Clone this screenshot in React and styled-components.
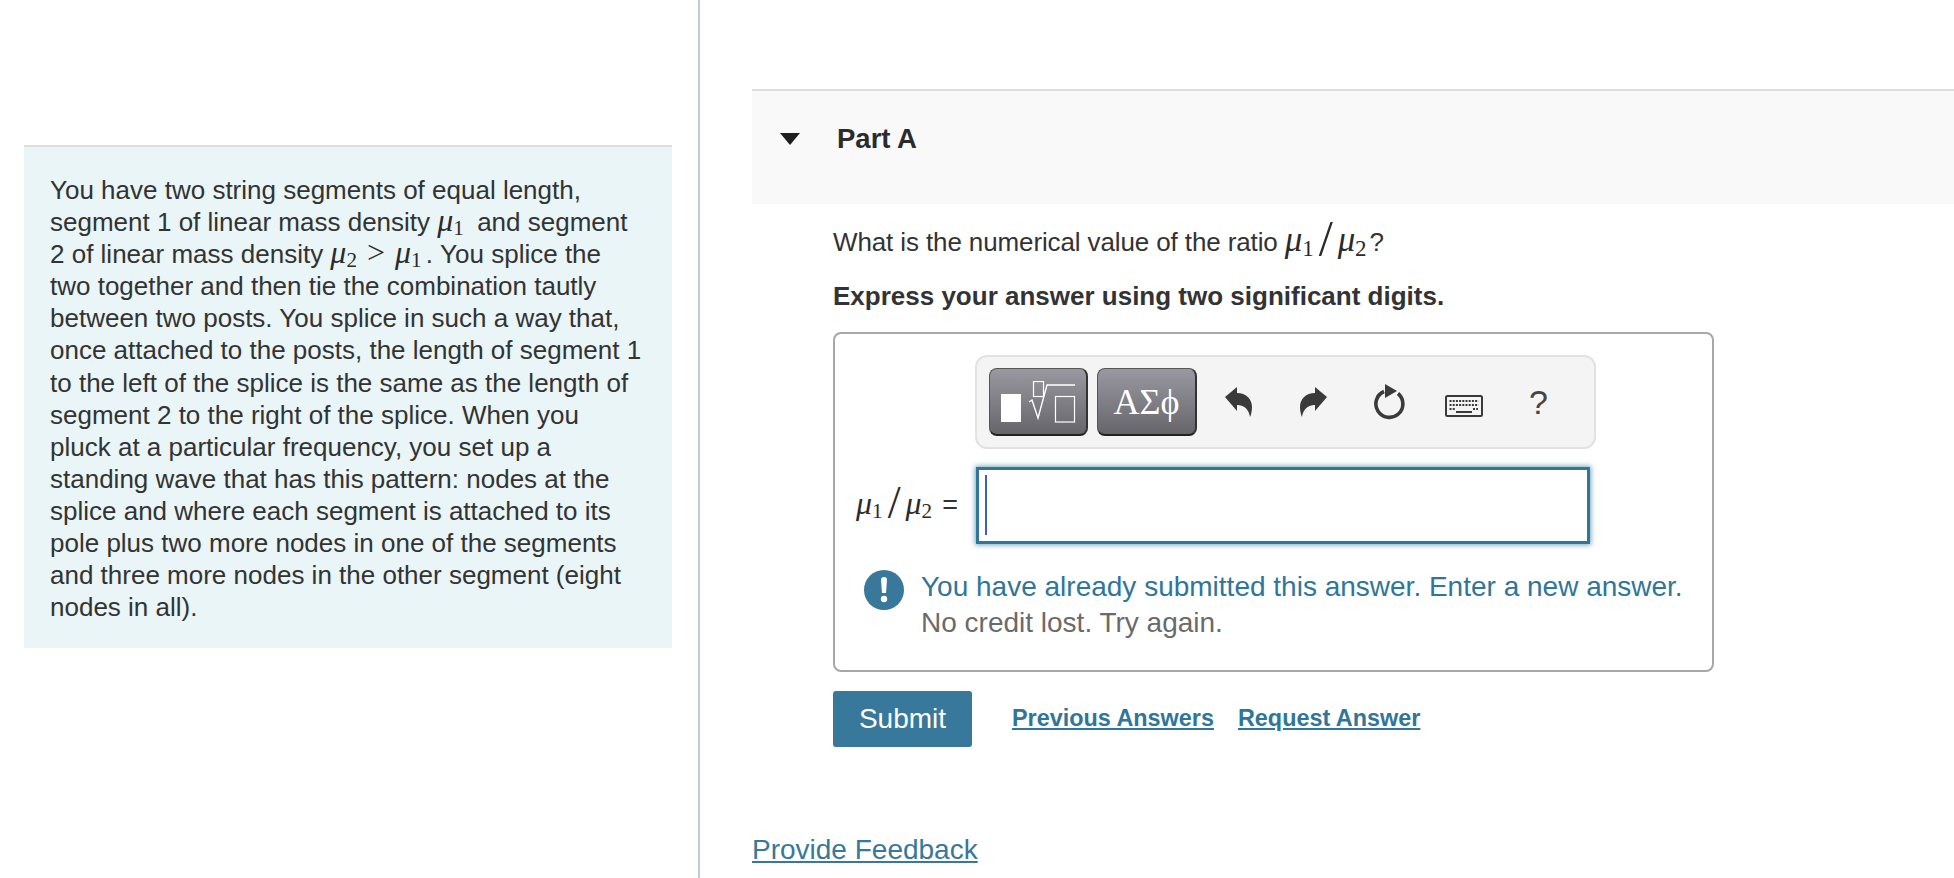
import React from "react";
import styled, { createGlobalStyle } from "styled-components";

const Global = createGlobalStyle`
  html, body { margin: 0; padding: 0; background: #fff; height: 100%; overflow: hidden; }
  body { font-family: "Liberation Sans", Arial, sans-serif; color: #333; }
`;
const Page = styled.div`
  display: grid; grid-template-columns: 700px 1fr; width: 1954px; height: 878px; overflow: hidden;
`;
const LeftCol = styled.div`
  border-right: 2px solid #bccde0; padding: 145px 26px 0 24px; box-sizing: border-box;
`;
const Intro = styled.div`
  border-top: 2px solid #dedede; background: #e9f5f7; height: 503px; box-sizing: border-box;
  padding: 27px 26px 0; font-size: 26px; line-height: 32.1px; color: #333; white-space: nowrap;
`;
const RightCol = styled.div`
  padding-top: 89px; padding-left: 52px; display: flex; flex-direction: column;
`;
const PartHeader = styled.div`
  border-top: 2px solid #dedede; background: #f9f9f9; height: 115px; box-sizing: border-box;
  display: flex; align-items: flex-start; padding: 31px 0 0 28px;
`;
const Caret = styled.span`
  width: 0; height: 0; border-left: 10.5px solid transparent; border-right: 10.5px solid transparent;
  border-top: 12px solid #1f1f1f; margin: 11px 37px 0 0;
`;
const PartTitle = styled.h2`
  margin: 0; font-size: 27.5px; line-height: 33px; font-weight: 700; color: #2b2b2b;
`;
const Body = styled.div`
  padding-left: 81px; display: flex; flex-direction: column;
`;
const Question = styled.p`
  margin: 21px 0 0; font-size: 26px; line-height: 34px; height: 34px; white-space: nowrap; letter-spacing: -0.12px;
`;
const Instruction = styled.p`
  margin: 20px 0 0; font-size: 26px; line-height: 34px; font-weight: 700;
`;
const AnswerBox = styled.div`
  margin-top: 19px; width: 881px; height: 340px; box-sizing: border-box;
  border: 2px solid #a8a8a8; border-radius: 8px; padding: 21px 0 0 0;
`;
const Toolbar = styled.div`
  margin-left: 140px; width: 621px; height: 94px; box-sizing: border-box;
  background: #f4f4f4; border: 2px solid #e2e2e2; border-radius: 12px;
  display: flex; align-items: center; padding: 0 0 0 12px;
`;
const ToolButton = styled.div`
  width: ${p => p.$w}px; height: 68px; box-sizing: border-box; margin-right: ${p => p.$mr}px;
  border-radius: 8px; border: 1px solid #555; border-bottom: 2px solid #222; border-right: 2px solid #333;
  background: linear-gradient(#9a99a1, #65656a); color: #fff;
  display: flex; align-items: center; justify-content: center;
`;
const GreekLabel = styled.span`
  font-family: "Liberation Serif", serif; font-size: 36px; line-height: 1; color: #fff;
`;
const IconSlot = styled.div`
  width: 75px; display: flex; justify-content: center; align-items: center; color: #3a3a3a;
`;
const HelpMark = styled.span`
  font-size: 34px; color: #444; line-height: 1;
`;
const InputRow = styled.div`
  display: flex; align-items: center; margin-top: 18px; padding-left: 21px;
`;
const Lhs = styled.div`
  width: 120px; white-space: nowrap;
`;
const Equals = styled.span`
  margin-left: 10px; font-size: 27px; color: #333;
`;
const FakeInput = styled.div`
  width: 614px; height: 77px; box-sizing: border-box; border: 3px solid #2f7699; background: #fff;
  box-shadow: 0 0 5px 1px rgba(47,118,153,.65); padding: 5px 6px;
`;
const Cursor = styled.div`
  width: 2px; height: 60px; background: #3f5fc7;
`;
const Feedback = styled.div`
  display: flex; margin: 25px 0 0 29px; gap: 17px;
`;
const AlertIcon = styled.div`
  width: 40px; height: 40px; border-radius: 50%; background: #37789b; color: #fff; margin-top: 1px;
  display: flex; align-items: center; justify-content: center; flex: none;
`;
const FeedbackText = styled.div`
  font-size: 28px; line-height: 36px;
`;
const FeedbackTitle = styled.div` color: #2f7699; white-space: nowrap; `;
const FeedbackNote = styled.div` color: #6a6a6a; `;
const Actions = styled.div`
  display: flex; align-items: center; margin-top: 19px;
`;
const Submit = styled.button`
  width: 139px; height: 56px; border: 0; border-radius: 3px; background: #37789b; color: #fff;
  font: 28px "Liberation Sans", Arial, sans-serif; margin-right: 40px; padding: 0;
`;
const ActionLink = styled.a`
  font-size: 23.4px; font-weight: 700; color: #2f7699; text-decoration: underline; margin-right: 24px; margin-top: -2px;
`;
const ProvideLink = styled.a`
  margin-top: 87px; font-size: 28px; color: #37789b; text-decoration: underline; align-self: flex-start;
`;
const MathSpan = styled.span`
  font-family: "Liberation Serif", serif; font-style: italic; font-size: ${p => p.$size || 32}px; line-height: 0; color: #2b2b2b;
  white-space: nowrap; margin-right: ${p => p.$gap || 0}px;
`;
const Operator = styled.span`
  font-style: normal; margin: 0 2px;
`;
const Sub = styled.sub`
  font-style: normal; font-size: 0.66em; vertical-align: -0.2em; line-height: 0;
`;
const Slash = styled.span`
  font-style: normal; font-size: 1.45em; font-weight: 300; line-height: 0; margin: 0 5px; vertical-align: -0.08em;
`;

const Mu = ({ n }) => <>μ<Sub>{n}</Sub></>;

const TemplatesIcon = () => (
  <svg width="75" height="42" viewBox="0 0 75 42" fill="none">
    <rect x="0" y="13" width="20" height="28" fill="#fff" />
    <rect x="32.5" y="0.5" width="10" height="15" stroke="#fff" strokeWidth="1.2" />
    <path d="M28 21l3-2 6 18 9-33h28" stroke="#fff" strokeWidth="1.4" />
    <rect x="54.5" y="15.5" width="19" height="25.5" stroke="#fff" strokeWidth="1.2" />
  </svg>
);
const UndoIcon = () => (
  <svg width="27" height="30" viewBox="0 0 27 30">
    <path d="M0 10L12 0v6c9 0 15 6 15 14 0 4-1 8-2 10-1-7-5-12-13-12v6z" fill="#3a3a3a" />
  </svg>
);
const RedoIcon = () => (
  <svg width="27" height="30" viewBox="0 0 27 30">
    <path d="M27 10L15 0v6C6 6 0 12 0 20c0 4 1 8 2 10 1-7 5-12 13-12v6z" fill="#3a3a3a" />
  </svg>
);
const ResetIcon = () => (
  <svg width="32" height="36" viewBox="0 0 32 36" fill="none">
    <path d="M11 7.5A13.5 13.5 0 1 0 25 9.5" stroke="#3a3a3a" strokeWidth="3.6" />
    <path d="M12 0l12 7-12 7z" fill="#3a3a3a" />
  </svg>
);
const KeyboardIcon = () => (
  <svg width="38" height="22" viewBox="0 0 38 22" style={{ marginTop: 8 }}>
    <rect x="1" y="1" width="36" height="20" rx="1.5" fill="#f4f4f4" stroke="#3a3a3a" strokeWidth="2" />
    <path d="M4.5 6h29M4.5 10h29M4.5 14h6M28 14h5" stroke="#3a3a3a" strokeWidth="2" strokeDasharray="2 1.2" />
    <path d="M11 17h16" stroke="#3a3a3a" strokeWidth="2" />
  </svg>
);
const Bang = () => (
  <svg width="8" height="26" viewBox="0 0 8 26">
    <path d="M1 2.5a3 2.5 0 0 1 6 0L6 16H2z" fill="#fff" />
    <circle cx="4" cy="22" r="3.2" fill="#fff" />
  </svg>
);

export default function App() {
  return (
    <>
      <Global />
      <Page>
        <LeftCol>
          <Intro>
            You have two string segments of equal length,<br />
            segment 1 of linear mass density <MathSpan $gap={6}><Mu n="1" /></MathSpan> and segment<br />
            2 of linear mass density <MathSpan $gap={4}><Mu n="2" /> <Operator>&gt;</Operator> <Mu n="1" /></MathSpan>. You splice the<br />
            two together and then tie the combination tautly<br />
            between two posts. You splice in such a way that,<br />
            once attached to the posts, the length of segment 1<br />
            to the left of the splice is the same as the length of<br />
            segment 2 to the right of the splice. When you<br />
            pluck at a particular frequency, you set up a<br />
            standing wave that has this pattern: nodes at the<br />
            splice and where each segment is attached to its<br />
            pole plus two more nodes in one of the segments<br />
            and three more nodes in the other segment (eight<br />
            nodes in all).
          </Intro>
        </LeftCol>
        <RightCol>
          <PartHeader>
            <Caret />
            <PartTitle>Part A</PartTitle>
          </PartHeader>
          <Body>
            <Question>
              What is the numerical value of the ratio <MathSpan $size={35} $gap={3}><Mu n="1" /><Slash>/</Slash><Mu n="2" /></MathSpan>?
            </Question>
            <Instruction>Express your answer using two significant digits.</Instruction>
            <AnswerBox>
              <Toolbar>
                <ToolButton $w={99} $mr={9}><TemplatesIcon /></ToolButton>
                <ToolButton $w={100} $mr={4}><GreekLabel>ΑΣϕ</GreekLabel></ToolButton>
                <IconSlot><UndoIcon /></IconSlot>
                <IconSlot><RedoIcon /></IconSlot>
                <IconSlot><ResetIcon /></IconSlot>
                <IconSlot><KeyboardIcon /></IconSlot>
                <IconSlot><HelpMark>?</HelpMark></IconSlot>
              </Toolbar>
              <InputRow>
                <Lhs>
                  <MathSpan><Mu n="1" /><Slash>/</Slash><Mu n="2" /></MathSpan><Equals>=</Equals>
                </Lhs>
                <FakeInput><Cursor /></FakeInput>
              </InputRow>
              <Feedback>
                <AlertIcon><Bang /></AlertIcon>
                <FeedbackText>
                  <FeedbackTitle>You have already submitted this answer. Enter a new answer.</FeedbackTitle>
                  <FeedbackNote>No credit lost. Try again.</FeedbackNote>
                </FeedbackText>
              </Feedback>
            </AnswerBox>
            <Actions>
              <Submit>Submit</Submit>
              <ActionLink href="#">Previous Answers</ActionLink>
              <ActionLink href="#">Request Answer</ActionLink>
            </Actions>
          </Body>
          <ProvideLink href="#">Provide Feedback</ProvideLink>
        </RightCol>
      </Page>
    </>
  );
}
